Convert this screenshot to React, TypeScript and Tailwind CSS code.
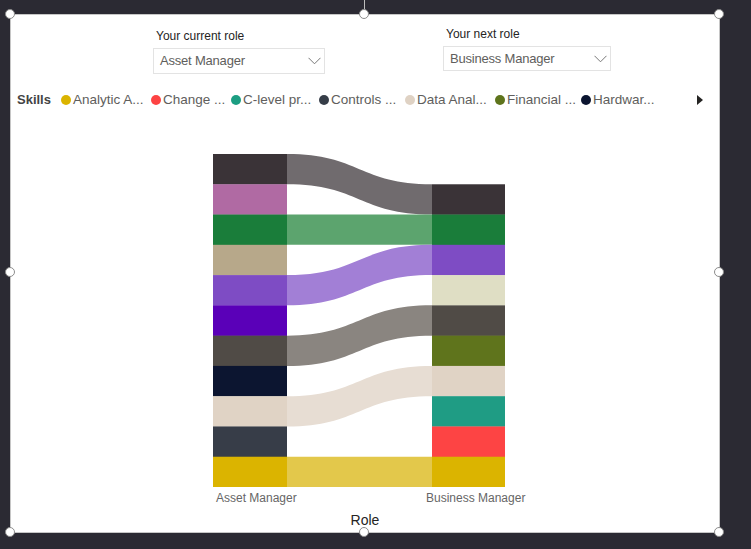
const leftNodes = [
  "#3a3337",
  "#b06aa3",
  "#1a7d3a",
  "#b7a88a",
  "#7e4cc4",
  "#5a00b8",
  "#504b46",
  "#0c1530",
  "#e0d3c5",
  "#373d48",
  "#dbb400",
];

const rightNodes = [
  "#3a3337",
  "#1a7d3a",
  "#7e4cc4",
  "#dfdec4",
  "#504b46",
  "#5f741c",
  "#e0d3c5",
  "#1f9c84",
  "#fd4444",
  "#dbb400",
];

// left slot -> right slot (right column starts one slot lower)
const links = [
  { from: 0, to: 1, color: "#706b6e" },
  { from: 2, to: 2, color: "#5ca46e" },
  { from: 4, to: 3, color: "#a27fd6" },
  { from: 6, to: 5, color: "#8a8580" },
  { from: 8, to: 7, color: "#e7ddd3" },
  { from: 10, to: 10, color: "#e3c84b" },
];

const legend = [
  { label: "Analytic A...", color: "#dbb400", w: "w-[90px]" },
  { label: "Change ...", color: "#fd4343", w: "w-[80px]" },
  { label: "C-level pr...", color: "#1c9e82", w: "w-[88px]" },
  { label: "Controls ...", color: "#363d48", w: "w-[86px]" },
  { label: "Data Anal...", color: "#dfd2c4", w: "w-[90px]" },
  { label: "Financial ...", color: "#5e741c", w: "w-[86px]" },
  { label: "Hardwar...", color: "#0b1530", w: "w-[86px]" },
];

const handles = [
  "left-[5px] top-[9px]",
  "left-[359px] top-[9px]",
  "left-[714px] top-[9px]",
  "left-[5px] top-[267px]",
  "left-[714px] top-[267px]",
  "left-[5px] top-[527px]",
  "left-[359px] top-[527px]",
  "left-[714px] top-[527px]",
];

function Chevron() {
  return (
    <svg width="13" height="8" viewBox="0 0 13 8" fill="none">
      <polyline points="0.5,0.8 6.5,6.8 12.5,0.8" stroke="#777" strokeWidth="1" />
    </svg>
  );
}

function Slicer({ label, value, width, height }: { label: string; value: string; width: string; height: string }) {
  return (
    <div className={width}>
      <div className="pl-[3px] text-[12px] leading-4 text-[#252423]">{label}</div>
      <div
        className={`mt-[4px] flex ${height} items-center justify-between border border-[#e3e3e3] pl-[6px] pr-[3px] text-[13px] tracking-[-0.2px] text-[#605e5c]`}
      >
        <span>{value}</span>
        <Chevron />
      </div>
    </div>
  );
}

function Sankey() {
  const W = 292;
  const H = 333;
  const nw = 74;
  const rx = 219;
  const h = H / 11;
  const mid = (nw + rx) / 2;
  return (
    <svg className="ml-[202px] mt-[44px] block shrink-0" width={W} height={H} viewBox={`0 0 ${W} ${H}`}>
      {links.map((l, i) => {
        const y1 = l.from * h;
        const y2 = l.to * h;
        const d = `M${nw},${y1} C${mid},${y1} ${mid},${y2} ${rx},${y2} L${rx},${y2 + h} C${mid},${y2 + h} ${mid},${y1 + h} ${nw},${y1 + h} Z`;
        return <path key={i} d={d} fill={l.color} />;
      })}
      {leftNodes.map((c, i) => (
        <rect key={`l${i}`} x={0} y={i * h} width={nw} height={h + 0.3} fill={c} />
      ))}
      {rightNodes.map((c, i) => (
        <rect key={`r${i}`} x={rx} y={(i + 1) * h} width={W - rx} height={h + 0.3} fill={c} />
      ))}
    </svg>
  );
}

export default function App() {
  return (
    <div className="relative h-[549px] w-[751px] overflow-hidden bg-[#2b2a33] pl-[10px] pt-[14px] font-['Liberation_Sans',Arial,sans-serif]">
      <div className="flex h-[519px] w-[710px] flex-col border border-[#c6c6c6] bg-white">
        <div className="flex items-start pl-[142px] pt-[13px]">
          <Slicer label="Your current role" value="Asset Manager" width="w-[172px]" height="h-[26px]" />
          <div className="-mt-[2px] ml-[118px]">
            <Slicer label="Your next role" value="Business Manager" width="w-[168px]" height="h-[25px]" />
          </div>
        </div>

        <div className="mt-[16px] flex h-[20px] items-center pl-[6px]">
          <span className="w-[44px] text-[13px] font-bold text-[#444]">Skills</span>
          {legend.map((item) => (
            <div key={item.label} className={`flex ${item.w} items-center`}>
              <span className="size-[10px] shrink-0 rounded-full" style={{ background: item.color }} />
              <span className="ml-[2px] whitespace-nowrap text-[13.5px] text-[#605e5c]">{item.label}</span>
            </div>
          ))}
          <svg className="ml-auto mr-[16px]" width="6" height="10" viewBox="0 0 6 10">
            <polygon points="0,0 6,5 0,10" fill="#252423" />
          </svg>
        </div>

        <Sankey />

        <div className="mt-[3px] flex pl-[205px] text-[12px] leading-4 text-[#666]">
          <span className="w-[210px]">Asset Manager</span>
          <span>Business Manager</span>
        </div>

        <div className="mt-[5px] text-center text-[14px] leading-[18px] text-[#252423]">Role</div>
      </div>

      <div className="absolute left-[364px] top-0 h-[10px] w-px bg-[#bdbdbd]" />
      {handles.map((pos) => (
        <div
          key={pos}
          className={`absolute ${pos} size-[10px] rounded-full border-[1.5px] border-[#8c8c8c] bg-white`}
        />
      ))}
    </div>
  );
}
